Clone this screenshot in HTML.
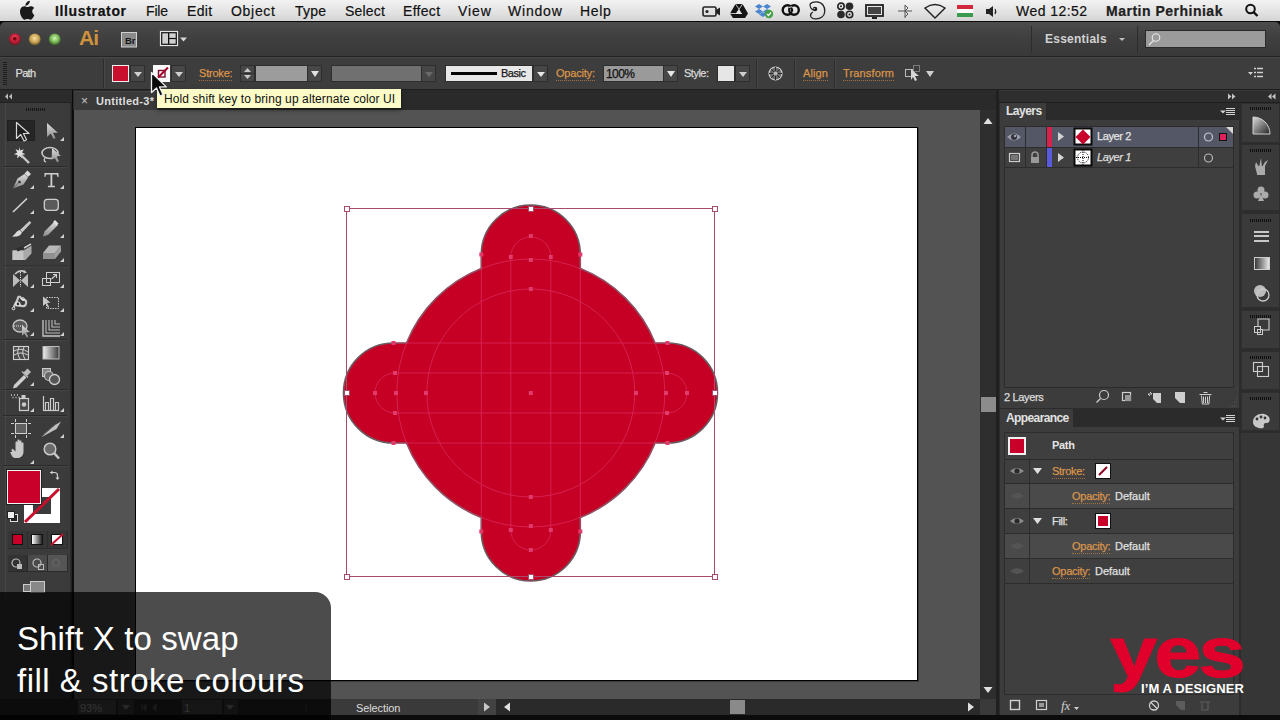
<!DOCTYPE html>
<html><head><meta charset="utf-8">
<style>
*{margin:0;padding:0;box-sizing:border-box}
html,body{width:1280px;height:720px;overflow:hidden;background:#0c0c0c;font-family:"Liberation Sans",sans-serif}
.a{position:absolute}
.t{position:absolute;white-space:nowrap;line-height:1}
svg{position:absolute;overflow:visible}
#menubar{left:0;top:0;width:1280px;height:21px;background:linear-gradient(#f2f2f2,#e2e2e2 60%,#d4d4d4)}
#menubar .t{font-size:14px;color:#111;top:4px;-webkit-text-stroke:0.2px #111}
#appbar{left:0;top:22px;width:1280px;height:35px;background:linear-gradient(#4c4c4c,#404040 40%,#383838);border-top-left-radius:5px;border-top-right-radius:5px}
#ctrl{left:0;top:56px;width:1280px;height:34px;background:#3d3d3d;border-top:1px solid #242424;box-shadow:inset 0 1px 0 #484848;border-bottom:1px solid #1e1e1e}
.ct{font-size:11px;color:#e4e4e4;top:68px;-webkit-text-stroke:0.25px currentColor}

.btn{position:absolute;background:#474747;border:1px solid #2e2e2e}
.tri{position:absolute;width:0;height:0;border-left:4px solid transparent;border-right:4px solid transparent;border-top:6px solid #d0d0d0}
.field{position:absolute;background:#9a9a9a;border:1px solid #2e2e2e}
.vd{position:absolute;width:1px;background:#2c2c2c;box-shadow:1px 0 0 #484848}
#tabbar{left:73px;top:90px;width:923px;height:20px;background:#2a2a2a}
#canvas{left:74px;top:110px;width:906px;height:589px;background:#535353}
#artboard{left:135px;top:127px;width:783px;height:554px;background:#fff;border:1px solid #000;box-shadow:1px 1px 0 #3a3a3a}
#tools{left:0;top:90px;width:72px;height:609px;background:#3b3b3b;border-right:2px solid #262626}
#dock{left:996px;top:90px;width:284px;height:625px;background:#2c2c2c;border-left:3px solid #202020}
#status{left:0;top:699px;width:980px;height:16px;background:#2b2b2b}
.pt{font-size:12px;color:#e6e6e6;font-weight:bold}
.lt{font-size:11px;color:#dcdcdc;-webkit-text-stroke:0.25px currentColor}
.t.or{color:#d9944a;border-bottom:1px dotted #a07040;padding-bottom:1px}
</style></head><body>
<!-- MENUBAR -->
<div id="menubar" class="a">
  <div class="t" style="left:55px;font-weight:bold;letter-spacing:0.65px">Illustrator</div>
  <div class="t" style="left:146px;letter-spacing:-0.15px">File</div>
  <div class="t" style="left:187px;letter-spacing:0.3px">Edit</div>
  <div class="t" style="left:231px;letter-spacing:0.7px">Object</div>
  <div class="t" style="left:295px;letter-spacing:0.2px">Type</div>
  <div class="t" style="left:345px;letter-spacing:0.2px">Select</div>
  <div class="t" style="left:403px;letter-spacing:0.3px">Effect</div>
  <div class="t" style="left:458px;letter-spacing:0.9px">View</div>
  <div class="t" style="left:508px;letter-spacing:0.8px">Window</div>
  <div class="t" style="left:580px;letter-spacing:0.7px">Help</div>
  <div class="t" style="left:1016px;letter-spacing:0.45px">Wed 12:52</div>
  <div class="t" style="left:1106px;font-weight:bold;letter-spacing:0.5px;color:#222">Martin Perhiniak</div>
</div>
<svg style="left:0;top:0" width="1280" height="22">
  <!-- apple -->
  <path transform="translate(27.5 10) scale(0.98) translate(-25.5 -12)" d="M26.5 6.2c.9-1.1 1.6-2.3 1.4-3.6-1.2.1-2.5.8-3.3 1.8-.7.8-1.4 2.1-1.2 3.3 1.3.1 2.5-.6 3.1-1.5zM30.3 13.4c0-2.3 1.9-3.4 2-3.5-1.1-1.6-2.8-1.8-3.4-1.8-1.4-.1-2.8.9-3.5.9-.7 0-1.8-.8-3-.8-1.6 0-3 .9-3.8 2.3-1.6 2.8-.4 6.9 1.2 9.1.8 1.1 1.6 2.3 2.8 2.3 1.1 0 1.6-.7 2.9-.7 1.4 0 1.8.7 3 .7 1.2 0 2-1.1 2.7-2.2.9-1.3 1.2-2.5 1.2-2.6 0 0-2.1-.9-2.1-3.7z" fill="#1a1a1a"/>
  <!-- camera -->
  <rect x="703" y="7" width="13" height="9" rx="1.5" fill="none" stroke="#222" stroke-width="1.6"/><path d="M716 10l4-2.5v8l-4-2.5z" fill="#222"/><circle cx="707" cy="11.5" r="1.6" fill="#222"/>
  <!-- drive -->
  <path d="M735.5 4h7l5.5 9.5-3 4.5h-12l-3-4.5z" fill="#151515"/><path d="M739 9l3 5h-6z" fill="#e4e4e4"/><path d="M735.5 4l3.5 5M742.5 4l-6.5 10M730 13.5h12" stroke="#e4e4e4" stroke-width=".8"/>
  <!-- dropbox -->
  <path d="M759 4l4 2.5-4 2.5-4-2.5zM767 4l4 2.5-4 2.5-4-2.5zM759 9l4 2.5-4 2.5-4-2.5zM767 9l4 2.5-4 2.5-4-2.5zM759 14.5l4-2.5 4 2.5-4 2.5z" fill="#4a86d0"/>
  <circle cx="769" cy="14" r="4.2" fill="#43a047"/><path d="M767 14l1.5 1.5 2.5-3" stroke="#fff" stroke-width="1.2" fill="none"/>
  <!-- cc -->
  <circle cx="787.5" cy="10" r="4.8" fill="none" stroke="#111" stroke-width="2.4"/><circle cx="794" cy="10" r="4.8" fill="none" stroke="#111" stroke-width="2.4"/><path d="M789 7.5a3 3 0 0 1 3.5 5" stroke="#e8e8e8" stroke-width="1" fill="none"/>
  <!-- face -->
  <path d="M810 4c3-3 10-3 13 1s2 10-1 12-9 3-11 0c-1-2 0-4 2-5" fill="none" stroke="#222" stroke-width="1.3"/><path d="M810 4c0 3 1 5 3 6" fill="none" stroke="#222" stroke-width="1.2"/><ellipse cx="815" cy="9" rx="2.3" ry="2.2" fill="#222"/><circle cx="814.3" cy="8.6" r=".7" fill="#ddd"/>
  <!-- dots -->
  <circle cx="841" cy="6.3" r="3.2" fill="none" stroke="#222" stroke-width="1.6"/><circle cx="841" cy="6.3" r="1" fill="#222"/><circle cx="849.5" cy="6.3" r="3.8" fill="#2a2a2a"/><circle cx="841" cy="14.5" r="3.8" fill="#2a2a2a"/><circle cx="849.5" cy="14.5" r="3.2" fill="none" stroke="#222" stroke-width="1.6"/><circle cx="849.5" cy="14.5" r="1" fill="#222"/>
  <!-- monitor -->
  <rect x="866" y="5" width="17" height="11" fill="none" stroke="#222" stroke-width="1.8"/><rect x="868" y="7" width="13" height="7" fill="#444"/><path d="M872 18h5" stroke="#222" stroke-width="2"/>
  <!-- bluetooth-ish -->
  <path d="M898 11h14M905 5v13M905 5l3 3-3 3 3 3-3 3" stroke="#555" stroke-width="1" fill="none"/>
  <!-- wifi -->
  <path d="M925 8q10-7 20 0l-10 10z" fill="none" stroke="#222" stroke-width="1.4"/>
  <!-- flag -->
  <rect x="957" y="5" width="16" height="4" fill="#d2283c"/><rect x="957" y="9" width="16" height="4" fill="#fafafa"/><rect x="957" y="13" width="16" height="4" fill="#3a9a4e"/>
  <!-- speaker -->
  <path d="M986 9h3l4-3v11l-4-3h-3z" fill="#222"/><path d="M995 9q1.5 2.5 0 5" stroke="#222" stroke-width="1.2" fill="none"/>
  <!-- search -->
  <circle cx="1250.5" cy="9" r="4.3" fill="none" stroke="#111" stroke-width="2"/><path d="M1253.5 12l4 4" stroke="#111" stroke-width="2.4"/>
</svg>
<div class="a" style="left:0;top:21px;width:1280px;height:1px;background:#0a0a0a"></div>

<!-- APP BAR -->
<div id="appbar" class="a"></div>
<svg style="left:0;top:22px" width="1280" height="35">
  <defs>
    <radialGradient id="rg" cx="50%" cy="40%" r="60%"><stop offset="0" stop-color="#ff6a7a"/><stop offset=".5" stop-color="#c81e3a"/><stop offset="1" stop-color="#6a1a24"/></radialGradient>
    <radialGradient id="yg" cx="50%" cy="40%" r="60%"><stop offset="0" stop-color="#f8e0a0"/><stop offset=".6" stop-color="#c8a050"/><stop offset="1" stop-color="#5a4a28"/></radialGradient>
    <radialGradient id="gg" cx="50%" cy="40%" r="60%"><stop offset="0" stop-color="#d0f8b0"/><stop offset=".6" stop-color="#70b050"/><stop offset="1" stop-color="#2e4a24"/></radialGradient>
  </defs>
  <circle cx="14.8" cy="17.2" r="6" fill="url(#rg)"/><circle cx="14.8" cy="16.8" r="2" fill="#7a0010"/>
  <circle cx="34.7" cy="17.5" r="6" fill="url(#yg)"/>
  <circle cx="54.7" cy="17.5" r="6" fill="url(#gg)"/>
  <rect x="121.5" y="10.5" width="15" height="14.5" fill="#8a8a8a" stroke="#d0d0d0" stroke-width="1"/>
  <text x="125" y="21.5" font-family="Liberation Sans" font-weight="bold" font-size="9.5" fill="#151515">Br</text>
  <rect x="160.5" y="9.5" width="17" height="14" fill="#111" stroke="#e4e4e4" stroke-width="1.2"/>
  <rect x="162.3" y="11.3" width="5.7" height="10.4" fill="#cfcfcf"/><rect x="169.3" y="11.3" width="6.4" height="4.6" fill="#cfcfcf"/><rect x="169.3" y="17.1" width="6.4" height="4.6" fill="#cfcfcf"/>
  <path d="M180 15.5h7l-3.5 4z" fill="#d8d8d8"/>
  <path d="M1031.5 4v27M1137.5 4v27" stroke="#2c2c2c" stroke-width="1"/>
  <path d="M1119 16h6l-3 3z" fill="#bdbdbd"/>
  <rect x="1145.5" y="8.5" width="120" height="17" fill="#9b9b9b" stroke="#2a2a2a" stroke-width="1"/>
  <circle cx="1156" cy="15.5" r="3.8" fill="none" stroke="#e8e8e8" stroke-width="1.1"/><path d="M1153.5 18.5l-4.5 4.5" stroke="#e8e8e8" stroke-width="1.2"/>
</svg>
<div class="t" style="left:79px;top:27px;font-size:21px;font-weight:bold;color:#cf923c;letter-spacing:-1px">Ai</div>
<div class="t pt" style="left:1045px;top:33px;color:#d2d2d2;letter-spacing:0.25px">Essentials</div>

<!-- CONTROL BAR -->
<div id="ctrl" class="a"></div>
<div class="a" style="left:3px;top:62px;width:4px;height:24px;background:repeating-linear-gradient(#1e1e1e 0 1px,transparent 1px 2px)"></div>
<div class="t ct" style="left:15.5px;top:68px;color:#dcdcdc;letter-spacing:-0.7px">Path</div>
<div class="vd" style="left:103px;top:59px;height:29px"></div>
<div class="a" style="left:112px;top:65px;width:17px;height:17px;background:#c8102e;border:1px solid #f0f0f0"></div>
<div class="btn" style="left:130px;top:65px;width:15px;height:17px"></div><div class="tri" style="left:133.5px;top:72px;border-width:5px 4px 0 4px"></div>
<div class="a" style="left:153px;top:65px;width:17px;height:17px;background:#fafafa"></div>
<svg style="left:153px;top:65px" width="17" height="17"><rect x="5.5" y="5.5" width="6.5" height="6.5" fill="none" stroke="#7a0a28" stroke-width="1.4"/><path d="M5 12.5L15 2.5" stroke="#a8002a" stroke-width="2"/></svg>
<div class="btn" style="left:171px;top:65px;width:15px;height:17px"></div><div class="tri" style="left:174.5px;top:72px;border-width:5px 4px 0 4px"></div>
<div class="t ct or" style="left:199px;letter-spacing:-0.2px">Stroke:</div>
<div class="btn" style="left:240px;top:65px;width:15px;height:17px"></div>
<svg style="left:240px;top:65px" width="15" height="17"><path d="M4 7h7l-3.5-4zM4 10h7l-3.5 4z" fill="#c8c8c8"/><path d="M1 8.5h13" stroke="#2e2e2e"/></svg>
<div class="field" style="left:255px;top:65px;width:53px;height:17px;background:#9c9c9c"></div>
<div class="btn" style="left:307px;top:65px;width:15px;height:17px"></div><div class="tri" style="left:310.5px;top:71px;border-width:6px 4px 0 4px;border-top-color:#e0e0e0"></div>
<div class="field" style="left:331px;top:65px;width:91px;height:17px;background:#707070"></div>
<div class="btn" style="left:421px;top:65px;width:15px;height:17px;background:#464646"></div><div class="tri" style="left:424.5px;top:72px;border-width:5px 4px 0 4px;border-top-color:#6a6a6a"></div>
<div class="a" style="left:445px;top:65px;width:88px;height:17px;background:#e8e8e8;border:1px solid #2e2e2e"></div>
<div class="a" style="left:451px;top:72px;width:46px;height:3px;background:#050505"></div>
<div class="t ct" style="left:501px;top:68px;color:#1a1a1a;letter-spacing:-0.5px">Basic</div>
<div class="btn" style="left:533px;top:65px;width:15px;height:17px"></div><div class="tri" style="left:536.5px;top:71.5px;border-width:5px 4px 0 4px;border-top-color:#e8e8e8"></div>
<div class="t ct or" style="left:556px;letter-spacing:-0.2px">Opacity:</div>
<div class="field" style="left:603px;top:65px;width:61px;height:17px;background:#9a9a9a"></div>
<div class="t ct" style="left:606px;top:68px;font-size:12px;color:#111;letter-spacing:-0.6px">100%</div>
<div class="btn" style="left:663px;top:65px;width:15px;height:17px"></div><div class="tri" style="left:666.5px;top:71px;border-width:6px 4px 0 4px;border-top-color:#e8e8e8"></div>
<div class="t ct" style="left:684px;letter-spacing:-0.5px;color:#d8d8d8">Style:</div>
<div class="a" style="left:717px;top:65px;width:18px;height:17px;background:#e6e6e6;border:1px solid #2e2e2e"></div>
<div class="btn" style="left:735px;top:65px;width:15px;height:17px"></div><div class="tri" style="left:738.5px;top:72px;border-width:5px 4px 0 4px"></div>
<div class="vd" style="left:756px;top:59px;height:29px"></div>
<svg style="left:768px;top:66px" width="16" height="16"><circle cx="7.5" cy="7.5" r="6.5" fill="#6a6a6a" stroke="#d0d0d0" stroke-width="1.2"/><path d="M7.5 1v13M1 7.5h13M3 3l9 9M12 3l-9 9" stroke="#2a2a2a" stroke-width="1"/><circle cx="7.5" cy="7.5" r="2" fill="#bbb"/></svg>
<div class="vd" style="left:794px;top:59px;height:29px"></div>
<div class="t ct or" style="left:803px;letter-spacing:0.1px">Align</div>
<div class="vd" style="left:834px;top:59px;height:29px"></div>
<div class="t ct or" style="left:843px;letter-spacing:0.15px">Transform</div>
<svg style="left:904px;top:64px" width="17" height="18"><rect x="1.5" y="5.5" width="7" height="7" fill="none" stroke="#bbb"/><rect x="9.5" y="1.5" width="6" height="6" fill="none" stroke="#bbb" stroke-dasharray="1 1"/><path d="M7 5l8 7-4 0 2 4-2 1-2-4-2 3z" fill="#d8d8d8"/></svg>
<div class="tri" style="left:926px;top:71px;border-width:6px 4px 0 4px;border-top-color:#d0d0d0"></div>
<svg style="left:1248px;top:67px" width="16" height="12"><path d="M0 5h5l-2.5 3z" fill="#d0d0d0"/><path d="M6 1.5h2M9 1.5h6M6 5.5h2M9 5.5h6M6 9.5h2M9 9.5h6" stroke="#d0d0d0" stroke-width="1.3"/></svg>


<!-- TOOLS -->
<div id="tools" class="a"></div>
<div class="a" style="left:5px;top:103px;width:66px;height:496px;border-left:1px solid #474747;border-right:1px solid #2c2c2c"></div>
<div class="a" style="left:0;top:90px;width:72px;height:13px;background:#2b2b2b;border-bottom:1px solid #222"></div>
<svg style="left:0;top:90px" width="72" height="14"><path d="M8 3.5l-3 3 3 3zM12 3.5l-3 3 3 3z" fill="#bdbdbd"/></svg>
<div class="a" style="left:26px;top:108px;width:20px;height:3px;background:repeating-linear-gradient(90deg,#151515 0 1px,transparent 1px 2px)"></div>
<div class="a" style="left:7px;top:120px;width:28px;height:21px;background:#262626;border:1px solid #202020"></div>
<svg style="left:0;top:0" width="72" height="620">
 <defs>
  <linearGradient id="tg" x1="0" x2="1"><stop offset="0" stop-color="#f0f0f0"/><stop offset="1" stop-color="#3a3a3a"/></linearGradient>
  <linearGradient id="ig" x1="0" y1="0" x2="0" y2="1"><stop offset="0" stop-color="#dcdcdc"/><stop offset="1" stop-color="#8a8a8a"/></linearGradient>
 </defs>
 <g stroke-width="1">
  <path d="M3 166.5h64M3 266h64M3 339.5h64M3 389.5h64M3 415.5h64M3 465.5h64" stroke="#2a2a2a"/>
  <path d="M3 167.5h64M3 267h64M3 340.5h64M3 390.5h64M3 416.5h64M3 466.5h64" stroke="#454545"/>
 </g>
 <g fill="#c8c8c8">
  <!-- corner triangles -->
  <path d="M64 141h-4l4-4zM64 189h-4l4-4zM34 189h-4l4-4zM34 214h-4l4-4zM64 214h-4l4-4zM34 238h-4l4-4zM64 238h-4l4-4zM64 262h-4l4-4zM34 288h-4l4-4zM64 288h-4l4-4zM34 312h-4l4-4zM64 312h-4l4-4zM34 336h-4l4-4zM64 336h-4l4-4zM34 386h-4l4-4zM34 412h-4l4-4zM64 412h-4l4-4zM64 438h-4l4-4zM34 464h-4l4-4z" fill="#d0d0d0"/>
  <!-- selection -->
  <path d="M16.5 122.5v16l4.2-4 3.3 6.5 2.6-1.2-3.2-6.3h5.6z" fill="#1e1e1e" stroke="#d8d8d8" stroke-width="1.2" stroke-linejoin="round"/>
  <!-- direct selection -->
  <path d="M47 123v14l3.8-3.5 2.8 5.5 2-1-2.7-5.3h5z" fill="url(#ig)"/>
  <!-- magic wand -->
  <path d="M19 147l1.3 3.5 3.5-1.3-1.8 3.3 3.3 1.8-3.6.6.6 3.6-2.6-2.5-2.6 2.5.5-3.6-3.6-.6 3.3-1.8-1.8-3.3 3.5 1.3z" fill="#e0e0e0"/>
  <path d="M21 155l8 8" stroke="#c8c8c8" stroke-width="2.4"/>
  <!-- lasso -->
  <ellipse cx="50" cy="153" rx="8" ry="5.5" fill="none" stroke="#c8c8c8" stroke-width="1.6"/>
  <path d="M45 158q-2 3 1 4" fill="none" stroke="#c8c8c8" stroke-width="1.3"/>
  <path d="M52 148l9 8-4.5.3 2.5 5-2 1-2.5-5-2.8 3z" fill="url(#ig)"/>
  <!-- pen -->
  <path d="M13 188.5l4.5-10 7-4.5 3.5 3.5-4.5 7z" fill="url(#ig)"/>
  <path d="M24.5 173.5l3-3 3.5 3.5-3 3z" fill="#d8d8d8"/>
  <circle cx="19.5" cy="182" r="1.3" fill="#2a2a2a"/><path d="M13.5 188l6-6" stroke="#555" stroke-width=".8"/>
  <!-- type -->
  <path d="M44.5 173h14v4h-1l-.8-2.4h-4.4v11.2h2.6v1.4h-7v-1.4h2.6v-11.2h-4.4l-.8 2.4h-.8z" fill="#cfcfcf"/>
  <!-- line -->
  <path d="M13 212l14-13.5" stroke="#d0d0d0" stroke-width="1.7"/>
  <!-- rounded rect -->
  <rect x="44.3" y="199.3" width="14" height="11" rx="3" fill="#5a5a5a" stroke="#cdcdcd" stroke-width="1.3"/>
  <!-- brush -->
  <path d="M20 230l9.5-9 1.8 1.8-9 9.5z" fill="#c8c8c8"/>
  <path d="M11.5 236.5c3-.5 4-5 8-6.5l2.5 2.5c-1.5 4-6 4.5-10.5 4z" fill="#d8d8d8"/>
  <!-- pencil -->
  <path d="M43 236.5l1.5-5 10-10 3.5 3.5-10 10z" fill="url(#ig)"/><path d="M53 222l2-2 3.5 3.5-2 2z" fill="#e0e0e0"/>
  <!-- blob brush -->
  <path d="M12.5 250.5h11l8-5v8l-6 6.5h-13z" fill="#a8a8a8"/><path d="M12.5 250.5h11v9.5h-11z" fill="#c4c4c4"/>
  <path d="M17 250c3-1 5-3 8-3l6-3" stroke="#2e2e2e" stroke-width="3" fill="none"/><path d="M24 248l7-4" stroke="#d0d0d0" stroke-width="1.5"/>
  <!-- eraser -->
  <path d="M43 253l6-7.5h12l-6 7.5z" fill="#b8b8b8"/><path d="M43 253h12v6h-12z" fill="#909090"/><path d="M55 253l6-7.5v6l-6 7.5z" fill="#a0a0a0"/>
  <!-- reflect -->
  <path d="M13 274l7 6.5-7 6.5zM28 274l-7 6.5 7 6.5z" fill="#bdbdbd"/>
  <path d="M20.5 272v15" stroke="#e8e8e8" stroke-dasharray="1.2 1.2"/>
  <path d="M15 274q5-5 10-2" fill="none" stroke="#c8c8c8" stroke-width="1.5"/><path d="M24 270l3 2.5-3.5 1z" fill="#c8c8c8"/>
  <!-- scale -->
  <rect x="42.5" y="278.5" width="8" height="7" fill="none" stroke="#d0d0d0"/><rect x="46.5" y="272.5" width="13" height="10" fill="none" stroke="#d0d0d0"/>
  <path d="M51.5 279l5-4.5M53 274.5h3.5v3.5" fill="none" stroke="#d0d0d0" stroke-width="1.1"/>
  <!-- warp -->
  <path d="M14 307c1-4 3-5 4-9 0-2 2-2 3 0 1 3 4 1 5 3 1 3-1 6-4 5-2 0-3-2-4 0" fill="none" stroke="#c8c8c8" stroke-width="2.2"/>
  <circle cx="18" cy="304" r="2" fill="#333" stroke="#eee" stroke-width="1.2"/><circle cx="23" cy="299" r="1.3" fill="none" stroke="#eee"/><circle cx="13.5" cy="308.5" r="1.3" fill="none" stroke="#eee"/>
  <!-- free transform -->
  <path d="M43 296.5l7.5 6-3.5.5 2.3 4.3-1.3.7-2.3-4.3-2.7 2.3z" fill="#c8c8c8"/>
  <rect x="46.5" y="297.5" width="12" height="11" fill="none" stroke="#c8c8c8" stroke-dasharray="1.5 1"/>
  <!-- shape builder -->
  <ellipse cx="20" cy="326" rx="7" ry="6" fill="#5a5a5a" stroke="#c8c8c8" stroke-width="1.3"/>
  <path d="M14 326h9" stroke="#eee" stroke-dasharray="1 1"/>
  <path d="M22 325l8 7-4 .4 2.4 4-1.6 1-2.4-4-2.4 2.4z" fill="url(#ig)"/>
  <!-- perspective grid -->
  <path d="M43 320v16h17" fill="none" stroke="#c8c8c8" stroke-width="1.3"/>
  <path d="M46 320v13h14M49 320v10h11M52 320v7h8M55 320v4h5" fill="none" stroke="#bbb" stroke-width="1.1"/>
  <!-- mesh -->
  <rect x="13.5" y="346.5" width="15" height="13" fill="#4a4a4a" stroke="#d0d0d0" stroke-width="1.1"/>
  <path d="M14 351q7-4 14 1M14 355q7-4 14 0M19 347q-3 6 1 12M24 347q-3 6 1 12" fill="none" stroke="#d0d0d0" stroke-width="1"/>
  <!-- gradient -->
  <rect x="43" y="346.5" width="16" height="12.5" fill="url(#tg)" stroke="#bbb"/>
  <!-- eyedropper -->
  <path d="M14 385l10-10 2.5 2.5-10 10-3.5 1z" fill="#d0d0d0"/><path d="M23.5 372.5l4-4 3.5 3.5-4 4z" fill="#bdbdbd"/><path d="M22 371.5l6 6" stroke="#bdbdbd" stroke-width="1.3"/>
  <!-- blend -->
  <rect x="42.5" y="368.5" width="8" height="8" fill="#888" stroke="#ccc"/><circle cx="49" cy="376" r="4.5" fill="#666" stroke="#ccc" stroke-width="1.1"/><circle cx="54.5" cy="379.5" r="5" fill="#555" stroke="#d0d0d0" stroke-width="1.3"/>
  <!-- symbol sprayer -->
  <path d="M11 395h2M14 395h2M17 395h2M12.5 397.5h2M15.5 397.5h2M18.5 397.5h2" stroke="#ccc" stroke-width="1.4" stroke-dasharray="1 1"/>
  <rect x="21.5" y="395" width="4" height="3" fill="#ccc"/>
  <rect x="19.5" y="398.5" width="9" height="12" fill="#4a4a4a" stroke="#d0d0d0" stroke-width="1.2"/><circle cx="24" cy="404.5" r="2.2" fill="#ccc"/>
  <!-- graph -->
  <path d="M43 410.5h16" stroke="#ccc" stroke-width="1.2"/>
  <path d="M43.5 396v14M45.5 402.5h3v8h-3zM50.5 398.5h3v12h-3zM55.5 402.5h3v8h-3z" fill="none" stroke="#ccc" stroke-width="1.2"/>
  <!-- artboard -->
  <rect x="15.5" y="423.5" width="11" height="10" fill="#606060" stroke="#d0d0d0"/>
  <path d="M11 423.5h3M28 423.5h3M11 433.5h3M28 433.5h3M15.5 419v3M26.5 419v3M15.5 435v3M26.5 435v3" stroke="#d0d0d0"/>
  <!-- slice -->
  <path d="M41.5 437l12-11 7.5-4.5-4.5 7.5-11 6z" fill="#c0c0c0"/><path d="M44 434l12-10" stroke="#666"/>
  <!-- hand -->
  <path d="M12 452c-1-3 0-4 1.5-2.5l2 2v-9c0-1.3 2-1.3 2 0v6.5-8.5c0-1.3 2-1.3 2 0v8.5-7.5c0-1.3 2-1.3 2 0v7.5-5.5c0-1.3 2-1.3 2 0v8c0 4-2.5 6.5-6 6.5h-2.5c-2.5 0-3.5-3-5-6z" fill="#c8c8c8"/>
  <!-- zoom -->
  <circle cx="50" cy="449" r="5.8" fill="#6a6a6a" stroke="#c8c8c8" stroke-width="1.5"/><path d="M54 453l5 5.5" stroke="#c8c8c8" stroke-width="2.6"/>
  <!-- swap arrows -->
  <path d="M50 472.5h4.5q3 0 3 3v3" fill="none" stroke="#cfcfcf" stroke-width="1.2"/><path d="M50 472.5l2.5-2v4zM57.5 480l-2-2.5h4z" fill="#cfcfcf"/>
  <!-- default fill/stroke -->
  <rect x="10.5" y="514.5" width="7" height="7" fill="#222" stroke="#ddd"/><rect x="7.5" y="511.5" width="7" height="7" fill="#eee" stroke="#222"/>
 </g>
</svg>
<!-- stroke swatch (back) -->
<div class="a" style="left:24px;top:488px;width:36px;height:35px;background:#fff"></div>
<div class="a" style="left:33px;top:497px;width:18px;height:17px;background:#3b3b3b"></div>
<svg style="left:24px;top:488px" width="36" height="35"><path d="M1 34L35 1" stroke="#c8102e" stroke-width="3"/></svg>
<!-- fill swatch -->
<div class="a" style="left:7px;top:470px;width:34px;height:34px;background:#c8002a;border:1px solid #f4f4f4;box-shadow:0 0 0 1px #222"></div>
<!-- mode buttons -->
<div class="a" style="left:8px;top:531px;width:60px;height:18px;background:#2c2c2c"></div>
<div class="a" style="left:8px;top:531px;width:19px;height:17px;background:#363636"></div>
<div class="a" style="left:28px;top:531px;width:19px;height:17px;background:#363636"></div>
<div class="a" style="left:48px;top:531px;width:19px;height:17px;background:#363636"></div>
<div class="a" style="left:12px;top:534px;width:11px;height:11px;background:#c8002a;border:1px solid #111"></div>
<div class="a" style="left:31px;top:534px;width:12px;height:11px;background:linear-gradient(90deg,#fff,#222);border:1px solid #111"></div>
<div class="a" style="left:51px;top:534px;width:12px;height:11px;background:#fff;border:1px solid #111"></div>
<svg style="left:51px;top:534px" width="12" height="11"><path d="M0 11L12 0" stroke="#c8102e" stroke-width="2"/></svg>
<div class="a" style="left:8px;top:555px;width:60px;height:17px;background:#2a2a2a"></div>
<div class="a" style="left:8px;top:555px;width:19px;height:16px;background:#333"></div>
<div class="a" style="left:28px;top:555px;width:19px;height:16px;background:#4a4a4a"></div>
<div class="a" style="left:48px;top:555px;width:19px;height:16px;background:#555"></div>
<svg style="left:8px;top:556px" width="58" height="15"><circle cx="8" cy="7" r="4" fill="none" stroke="#bbb" stroke-width="1.2"/><rect x="9" y="8" width="5" height="5" fill="#bbb"/><circle cx="29" cy="7" r="4" fill="none" stroke="#bbb" stroke-width="1.2"/><rect x="30.5" y="8.5" width="5" height="5" fill="none" stroke="#bbb"/><circle cx="48" cy="7" r="3.5" fill="none" stroke="#6a6a6a"/></svg>
<svg style="left:22px;top:580px" width="26" height="14"><rect x="1.5" y="4.5" width="8" height="7" fill="#777" stroke="#ccc"/><rect x="8.5" y="1.5" width="14" height="11" fill="#888" stroke="#ccc"/></svg>

<!-- TAB BAR + CANVAS -->
<div id="tabbar" class="a"></div>
<div class="a" style="left:74px;top:91px;width:84px;height:19px;background:#3a3a3a;border-top:1px solid #444"></div>
<div class="t" style="left:81px;top:95px;font-size:12px;color:#c8c8c8">&#215;</div>
<div class="t" style="left:96px;top:96px;font-size:11px;font-weight:bold;color:#dedede;letter-spacing:0.3px">Untitled-3*</div>
<div id="canvas" class="a"></div>
<div id="artboard" class="a"></div>


<!-- SHAPE -->
<svg style="left:0;top:0" width="1280" height="720">
 <path d="M481.3 268.5 L481.3 254.5 A49.5 49.5 0 0 1 580.3 254.5 L580.3 268.5 A134 134 0 0 1 655.1 343.0 L667.5 343.0 A50 50 0 0 1 667.5 443.0 L655.1 443.0 A134 134 0 0 1 580.3 517.5 L580.3 531.5 A49.5 49.5 0 0 1 481.3 531.5 L481.3 517.5 A134 134 0 0 1 406.5 443.0 L393.5 443.0 A50 50 0 0 1 393.5 343.0 L406.5 343.0 A134 134 0 0 1 481.3 268.5Z" fill="#c60025" stroke="#6b5a60" stroke-width="1.6"/>
 
 <g stroke="#e0386a" stroke-width="0.8" fill="none" opacity="0.75">
  <circle cx="530.8" cy="393" r="134"/>
  <circle cx="530.8" cy="393" r="104"/>
  <path d="M481.29999999999995 254.5V531.5M580.3 254.5V531.5M393.5 343H667.5M393.5 443H667.5"/>
  <path d="M510.8 257A20 20 0 0 1 550.8 257M550.8 530A20 20 0 0 1 510.8 530"/>
  <path d="M510.8 257V530M550.8 257V530"/>
  <path d="M395 373H667A20 20 0 0 1 667 413H395A20 20 0 0 1 395 373"/>
 </g>
 <rect x="479.29999999999995" y="252.5" width="4" height="4" fill="#e23a6a"/><rect x="578.3" y="252.5" width="4" height="4" fill="#e23a6a"/><rect x="479.29999999999995" y="529.5" width="4" height="4" fill="#e23a6a"/><rect x="578.3" y="529.5" width="4" height="4" fill="#e23a6a"/><rect x="391.5" y="341" width="4" height="4" fill="#e23a6a"/><rect x="391.5" y="441" width="4" height="4" fill="#e23a6a"/><rect x="665.5" y="341" width="4" height="4" fill="#e23a6a"/><rect x="665.5" y="441" width="4" height="4" fill="#e23a6a"/><rect x="528.8" y="234" width="4" height="4" fill="#e23a6a"/><rect x="508.79999999999995" y="255" width="4" height="4" fill="#e23a6a"/><rect x="548.8" y="255" width="4" height="4" fill="#e23a6a"/><rect x="528.8" y="258" width="4" height="4" fill="#e23a6a"/><rect x="528.8" y="287" width="4" height="4" fill="#e23a6a"/><rect x="528.8" y="495" width="4" height="4" fill="#e23a6a"/><rect x="528.8" y="524" width="4" height="4" fill="#e23a6a"/><rect x="508.79999999999995" y="528" width="4" height="4" fill="#e23a6a"/><rect x="548.8" y="528" width="4" height="4" fill="#e23a6a"/><rect x="528.8" y="548" width="4" height="4" fill="#e23a6a"/><rect x="373" y="391" width="4" height="4" fill="#e23a6a"/><rect x="393" y="371" width="4" height="4" fill="#e23a6a"/><rect x="393" y="411" width="4" height="4" fill="#e23a6a"/><rect x="394" y="391" width="4" height="4" fill="#e23a6a"/><rect x="424" y="391" width="4" height="4" fill="#e23a6a"/><rect x="634" y="391" width="4" height="4" fill="#e23a6a"/><rect x="664" y="391" width="4" height="4" fill="#e23a6a"/><rect x="665" y="371" width="4" height="4" fill="#e23a6a"/><rect x="665" y="411" width="4" height="4" fill="#e23a6a"/><rect x="685" y="391" width="4" height="4" fill="#e23a6a"/><rect x="528.8" y="391" width="4" height="4" fill="#e23a6a"/>
 <rect x="346.5" y="208.5" width="368" height="368" fill="none" stroke="#a84a6c" stroke-width="1"/>
 <g fill="#fff" stroke="#a84a6c" stroke-width="1">
  <rect x="344.5" y="206.5" width="5" height="5"/><rect x="712.5" y="206.5" width="5" height="5"/>
  <rect x="344.5" y="574.5" width="5" height="5"/><rect x="712.5" y="574.5" width="5" height="5"/>
  <rect x="528.5" y="206.5" width="5" height="5"/><rect x="528.5" y="574.5" width="5" height="5"/>
  <rect x="344.5" y="390.5" width="5" height="5"/><rect x="712.5" y="390.5" width="5" height="5"/>
 </g>
</svg>


<!-- VERTICAL SCROLLBAR -->
<div class="a" style="left:980px;top:110px;width:16px;height:589px;background:#2e2e2e"></div>
<svg style="left:980px;top:110px" width="16" height="590"><path d="M3.5 14h9l-4.5-6z" fill="#e0e0e0"/><path d="M3.5 577h9l-4.5 6z" fill="#e0e0e0"/></svg>
<div class="a" style="left:981px;top:397px;width:15px;height:15px;background:#8c8c8c"></div>
<!-- STATUS BAR -->
<div id="status" class="a"></div>
<div class="a" style="left:78px;top:700px;width:38px;height:14px;background:#4a4a4a"></div>
<div class="a" style="left:118px;top:700px;width:16px;height:14px;background:#3e3e3e"></div>
<div class="a" style="left:182px;top:700px;width:40px;height:14px;background:#4a4a4a"></div>
<div class="a" style="left:224px;top:700px;width:14px;height:14px;background:#3e3e3e"></div>
<div class="t" style="left:80px;top:703px;font-size:11px;color:#aaa">93%</div>
<div class="t" style="left:184px;top:703px;font-size:11px;color:#aaa">1</div>
<svg style="left:118px;top:700px" width="120" height="14"><path d="M4 5h8l-4 5zM108 5h8l-4 5z" fill="#888"/><path d="M24 4v7M28 4v7l-3-3.5zM38 4v7l-3-3.5zM188 4v7" stroke="#555" fill="#555"/></svg>
<div class="a" style="left:331px;top:699px;width:147px;height:16px;background:#3a3a3a"></div>
<div class="t" style="left:356px;top:703px;font-size:11px;color:#dcdcdc;letter-spacing:-0.1px">Selection</div>
<div class="a" style="left:478px;top:699px;width:18px;height:16px;background:#424242"></div>
<svg style="left:478px;top:699px" width="18" height="16"><path d="M6 3.5v9l6-4.5z" fill="#c8c8c8"/></svg>
<div class="a" style="left:496px;top:699px;width:484px;height:16px;background:#2a2a2a"></div>
<svg style="left:496px;top:699px" width="484" height="16"><path d="M14 3.5v9l-6-4.5z" fill="#e0e0e0"/><path d="M472 3.5v9l6-4.5z" fill="#e0e0e0"/></svg>
<div class="a" style="left:730px;top:700px;width:15px;height:14px;background:#8a8a8a"></div>
<div class="a" style="left:980px;top:699px;width:16px;height:16px;background:#3a3a3a"></div>

<!-- DOCK -->
<div id="dock" class="a"></div>
<div class="a" style="left:999px;top:90px;width:281px;height:13px;background:#2e2e2e;border-top:1px solid #383838;border-bottom:1px solid #1e1e1e"></div>
<svg style="left:996px;top:90px" width="284" height="14"><path d="M232 3.5l3.5 3-3.5 3zM236 3.5l3.5 3-3.5 3zM275.5 3.5l-3.5 3 3.5 3zM279.5 3.5l-3.5 3 3.5 3z" fill="#c4c4c4"/></svg>
<!-- Layers panel -->
<div class="a" style="left:1000px;top:103px;width:239px;height:305px;background:#3c3c3c"></div>
<div class="a" style="left:1046px;top:103px;width:193px;height:17px;background:#2b2b2b"></div>
<div class="t pt" style="left:1006px;top:105px;letter-spacing:-0.5px;color:#e2e2e2">Layers</div>
<svg style="left:1219px;top:106px" width="17" height="12"><path d="M1 4.5h6l-3 3z" fill="#d0d0d0"/><path d="M7 2.5h9M7 4.5h9M7 6.5h9M7 8.5h9" stroke="#d4d4d4" stroke-width="1"/></svg>
<div class="a" style="left:1004px;top:126px;width:230px;height:262px;background:#3f3f3f;border:1px solid #2c2c2c"></div>
<div class="a" style="left:1005px;top:127px;width:228px;height:20px;background:#535766"></div>
<div class="a" style="left:1005px;top:147px;width:228px;height:1px;background:#2c2c2c"></div>
<div class="a" style="left:1005px;top:167px;width:228px;height:1px;background:#2c2c2c"></div>
<div class="a" style="left:1025px;top:127px;width:1px;height:40px;background:#2c2c2c"></div>
<div class="a" style="left:1046px;top:127px;width:1px;height:40px;background:#2c2c2c"></div>
<div class="a" style="left:1198px;top:127px;width:1px;height:40px;background:#2c2c2c"></div>
<div class="a" style="left:1047px;top:127px;width:5px;height:20px;background:#d6234c"></div>
<div class="a" style="left:1047px;top:148px;width:5px;height:19px;background:#5a5adc"></div>
<svg style="left:1004px;top:126px" width="232" height="44">
 <path d="M3 11q7-7 14 0q-7 7-14 0z" fill="#9a9ca8"/><circle cx="10" cy="11" r="3" fill="#353540"/><circle cx="11" cy="10" r="1" fill="#ccc"/>
 <rect x="5.5" y="27.5" width="10" height="8" fill="none" stroke="#cfcfcf" stroke-width="1.2"/><rect x="7" y="29" width="7" height="5" fill="#777"/>
 <path d="M28 31v-2a3 3 0 0 1 6 0v2" fill="none" stroke="#9a9a9a" stroke-width="1.5"/><rect x="27" y="31" width="8" height="6" fill="#9a9a9a"/>
 <path d="M54 6v9l6-4.5zM54 27v9l6-4.5z" fill="#d4d4d4"/>
 <rect x="70.5" y="2.5" width="17" height="16" fill="#fff" stroke="#0a0a0a" stroke-width="2"/><path d="M79 3.5l7.5 7.5-7.5 7.5-7.5-7.5z" fill="#c8002a"/>
 <rect x="70.5" y="23.5" width="17" height="16" fill="#fff" stroke="#0a0a0a" stroke-width="2"/>
 <g stroke="#111" stroke-width="1" stroke-dasharray="1 1"><circle cx="79" cy="31.5" r="5.5" fill="none"/><path d="M72 31.5h14M79 24v15"/></g>
 <circle cx="204.5" cy="11" r="4" fill="none" stroke="#c8c8d0" stroke-width="1.2"/>
 <circle cx="204.5" cy="32" r="4" fill="none" stroke="#b8b8b8" stroke-width="1.2"/>
 <rect x="215.5" y="7.5" width="7" height="7" fill="#e0205a" stroke="#111"/>
 <path d="M222 1h7v7z" fill="#d8d8d8"/>
</svg>
<div class="t lt" style="left:1097px;top:131px;color:#e4e4e4;letter-spacing:-0.4px">Layer 2</div>
<div class="t lt" style="left:1097px;top:152px;font-style:italic;color:#dedede;letter-spacing:-0.4px">Layer 1</div>
<!-- layers footer -->
<div class="t lt" style="left:1004px;top:392px;color:#dcdcdc;letter-spacing:-0.35px">2 Layers</div>
<svg style="left:1090px;top:388px" width="150" height="20">
 <g fill="none" stroke="#cfcfcf" stroke-width="1.2"><circle cx="14" cy="7" r="4.5"/><path d="M10.5 10.5l-4 4"/>
 <rect x="32.5" y="4.5" width="8" height="8"/></g>
 <rect x="35" y="7" width="6" height="6" fill="#999"/>
 <path d="M58 6h4l-2-2M58 6l2 2" stroke="#cfcfcf" fill="none"/><path d="M63 5h8v10h-4l-4-4z" fill="#cfcfcf"/>
 <path d="M85 4h10v11h-5l-5-5z" fill="#cfcfcf"/>
 <path d="M109.5 6.5h12M111.5 7.5l.8 8.5h6.6l.8-8.5M113.5 8.5v6.5M115.5 8.5v6.5M117.5 8.5v6.5M113.5 4.5h4" fill="none" stroke="#cfcfcf" stroke-width="1"/>
 <path d="M140 18h8M144 14h4M146 10h2" stroke="#555" stroke-dasharray="1 1"/>
</svg>
<!-- Appearance panel -->
<div class="a" style="left:1000px;top:409px;width:239px;height:306px;background:#3c3c3c"></div>
<div class="a" style="left:1073px;top:409px;width:166px;height:18px;background:#2b2b2b"></div>
<div class="t pt" style="left:1006px;top:412px;letter-spacing:-0.6px;color:#e2e2e2">Appearance</div>
<svg style="left:1219px;top:413px" width="17" height="12"><path d="M1 4.5h6l-3 3z" fill="#d0d0d0"/><path d="M7 2.5h9M7 4.5h9M7 6.5h9M7 8.5h9" stroke="#d4d4d4" stroke-width="1"/></svg>
<div class="a" style="left:1004px;top:432px;width:230px;height:263px;background:#3f3f3f;border:1px solid #2c2c2c"></div>
<div class="a" style="left:1005px;top:459px;width:228px;height:1px;background:#2c2c2c"></div>
<div class="a" style="left:1005px;top:484px;width:228px;height:24px;background:#4a4a4a"></div>
<div class="a" style="left:1005px;top:483px;width:228px;height:1px;background:#2c2c2c"></div>
<div class="a" style="left:1005px;top:508px;width:228px;height:1px;background:#2c2c2c"></div>
<div class="a" style="left:1005px;top:534px;width:228px;height:24px;background:#4a4a4a"></div>
<div class="a" style="left:1005px;top:533px;width:228px;height:1px;background:#2c2c2c"></div>
<div class="a" style="left:1005px;top:558px;width:228px;height:1px;background:#2c2c2c"></div>
<div class="a" style="left:1005px;top:583px;width:228px;height:1px;background:#2c2c2c"></div>
<div class="a" style="left:1029px;top:460px;width:1px;height:123px;background:#2c2c2c"></div>
<div class="a" style="left:1008px;top:437px;width:18px;height:18px;background:#c8002a;border:2px solid #f0f0f0"></div>
<div class="t pt" style="left:1052px;top:440px;font-size:11px;letter-spacing:-0.3px;color:#e4e4e4">Path</div>
<svg style="left:1005px;top:460px" width="230" height="125">
 <g fill="#8e8e8e"><path d="M5 11q7-6 14 0q-7 6-14 0z"/><path d="M5 61q7-6 14 0q-7 6-14 0z"/></g>
 <circle cx="12" cy="11" r="2.6" fill="#2a2a2a"/><circle cx="12" cy="61" r="2.6" fill="#2a2a2a"/>
 <g fill="#545454"><path d="M5 36q7-6 14 0q-7 6-14 0z"/><path d="M5 86q7-6 14 0q-7 6-14 0z"/><path d="M5 111q7-6 14 0q-7 6-14 0z"/></g>
 <path d="M28 8h9l-4.5 6zM28 58h9l-4.5 6z" fill="#e0e0e0"/>
 <rect x="90.5" y="3.5" width="15" height="15" fill="#fff" stroke="#111"/><path d="M94 15l8-8" stroke="#8a0020" stroke-width="2"/>
 <rect x="90.5" y="53.5" width="15" height="15" fill="#fff" stroke="#111"/><rect x="93" y="56" width="10" height="10" fill="#c8002a"/>
</svg>
<div class="t lt or" style="left:1052px;top:466px;letter-spacing:-0.3px">Stroke:</div>
<div class="t lt or" style="left:1072px;top:491px;letter-spacing:-0.25px">Opacity:</div>
<div class="t lt" style="left:1115px;top:491px;color:#e0e0e0">Default</div>
<div class="t lt" style="left:1052px;top:516px;letter-spacing:-0.3px;color:#e0e0e0">Fill:</div>
<div class="t lt or" style="left:1072px;top:541px;letter-spacing:-0.25px">Opacity:</div>
<div class="t lt" style="left:1115px;top:541px;color:#e0e0e0">Default</div>
<div class="t lt or" style="left:1052px;top:566px;letter-spacing:-0.25px">Opacity:</div>
<div class="t lt" style="left:1095px;top:566px;color:#e0e0e0">Default</div>
<svg style="left:1000px;top:696px" width="240" height="19">
 <rect x="10.5" y="4.5" width="9" height="9" fill="none" stroke="#cfcfcf" stroke-width="1.4"/>
 <rect x="36.5" y="4.5" width="10" height="9" fill="none" stroke="#cfcfcf" stroke-width="1.2"/><rect x="39" y="7" width="5" height="4" fill="#999"/>
 <text x="61" y="14" font-family="Liberation Serif" font-style="italic" font-size="13" fill="#cfcfcf">fx</text><path d="M74 11h5l-2.5 3z" fill="#cfcfcf"/>
 <circle cx="154" cy="9.5" r="4.5" fill="none" stroke="#cfcfcf" stroke-width="1.3"/><path d="M151 6.5l6 6" stroke="#cfcfcf" stroke-width="1.3"/>
 <path d="M176 5h9v9h-4l-5-5z" fill="#5c5c5c"/>
 <path d="M200 6h10M202 6v8h6v-8" fill="none" stroke="#5c5c5c" stroke-width="1.2"/>
</svg>
<!-- right icon strip -->
<div class="a" style="left:1241px;top:103px;width:39px;height:40px;background:#3a3a3a;border:1px solid #2e2e2e"></div>
<div class="a" style="left:1241px;top:144px;width:39px;height:67px;background:#3a3a3a;border:1px solid #2e2e2e"></div>
<div class="a" style="left:1241px;top:213px;width:39px;height:95px;background:#3a3a3a;border:1px solid #2e2e2e"></div>
<div class="a" style="left:1241px;top:310px;width:39px;height:39px;background:#3a3a3a;border:1px solid #2e2e2e"></div>
<div class="a" style="left:1241px;top:351px;width:39px;height:39px;background:#3a3a3a;border:1px solid #2e2e2e"></div>
<div class="a" style="left:1241px;top:392px;width:39px;height:39px;background:#3a3a3a;border:1px solid #2e2e2e"></div>
<div class="a" style="left:1241px;top:433px;width:39px;height:282px;background:#363636"></div>
<svg style="left:1240px;top:100px" width="40" height="340">
 <g stroke="#0e0e0e" stroke-width="3" stroke-dasharray="1 1"><path d="M10 8.5h21M10 50.5h21M10 120.5h21M10 216.5h21M10 257.5h21M10 298.5h21"/></g>
 <defs><linearGradient id="gq" x1="0" y1="0" x2="1" y2="1"><stop offset="0" stop-color="#ddd"/><stop offset="1" stop-color="#222"/></linearGradient>
 <linearGradient id="gr"><stop offset="0" stop-color="#333"/><stop offset="1" stop-color="#eee"/></linearGradient></defs>
 <path d="M13 17v17h17a17 17 0 0 0-17-17z" fill="url(#gq)" stroke="#d0d0d0" stroke-width="1"/>
 <path d="M17 74h8v-8l3-6-3 2-3 5-1-9-2 9-3-5-1 4z" fill="#aaa"/><rect x="17" y="66" width="8" height="9" fill="#aaa"/>
 <circle cx="21" cy="90" r="3.5" fill="#aaa"/><circle cx="17" cy="95" r="3.5" fill="#aaa"/><circle cx="25" cy="95" r="3.5" fill="#aaa"/><path d="M21 94l-3 7h6z" fill="#aaa"/>
 <path d="M14 132h15M14 136h15M14 141h15" stroke="#c8c8c8" stroke-width="2"/>
 <rect x="14.5" y="157.5" width="15" height="12" fill="url(#gr)" stroke="#ccc"/>
 <circle cx="20" cy="191" r="6" fill="#bbb"/><circle cx="23" cy="195" r="6" fill="none" stroke="#ccc" stroke-width="1.3"/>
 <rect x="14.5" y="226.5" width="6" height="6" fill="none" stroke="#ccc"/><rect x="17.5" y="229.5" width="5" height="5" fill="none" stroke="#ccc"/><path d="M18 226v-7h11v11h-7" fill="none" stroke="#ccc" stroke-width="1.1"/>
 <rect x="13.5" y="262.5" width="9" height="9" fill="none" stroke="#ccc" stroke-width="1.1"/><rect x="17.5" y="266.5" width="11" height="10" fill="none" stroke="#ccc" stroke-width="1.1"/>
 <path d="M13 322c0-6 6-9 11-8 5 1 7 5 5 8-2 2-4 0-5 2s1 3-1 4c-4 1-10-1-10-6z" fill="#c8c8c8"/><circle cx="17" cy="319" r="1.4" fill="#333"/><circle cx="21" cy="317" r="1.4" fill="#333"/><circle cx="25" cy="318" r="1.4" fill="#333"/>
</svg>


<!-- TOOLTIP -->
<div class="a" style="left:157px;top:89px;width:244px;height:19px;background:#fbfbc8;box-shadow:0 2px 4px rgba(0,0,0,.5)"></div>
<div class="t" style="left:164px;top:93px;font-size:12px;color:#111;letter-spacing:0.1px">Hold shift key to bring up alternate color UI</div>
<!-- CURSOR -->
<svg style="left:150px;top:71px" width="20" height="30"><path d="M1.5 1.5v20l5-4.5 3.5 8 3-1.3-3.5-7.8h6.8z" fill="#0a0a0a" stroke="#f0f0f0" stroke-width="1.3" stroke-linejoin="round"/></svg>
<!-- OVERLAY CAPTION -->
<div class="a" style="left:0;top:592px;width:331px;height:128px;background:rgba(0,0,0,0.7);border-top-right-radius:16px"></div>
<div class="t" style="left:17px;top:622px;font-size:33px;color:#fff;letter-spacing:0.1px">Shift X to swap</div>
<div class="t" style="left:17px;top:663.5px;font-size:33px;color:#fff;letter-spacing:0.5px">fill &amp; stroke colours</div>
<!-- YES LOGO -->
<div class="t" style="left:1110px;top:616px;font-size:72px;font-weight:bold;color:#e0002b;letter-spacing:-2.5px;transform:scaleX(1.18);transform-origin:0 0;-webkit-text-stroke:1px #e0002b">yes</div>
<div class="t" style="left:1141px;top:682px;font-size:13px;font-weight:bold;color:#fff;letter-spacing:0.1px">I&#8217;M A DESIGNER</div>

</body></html>
